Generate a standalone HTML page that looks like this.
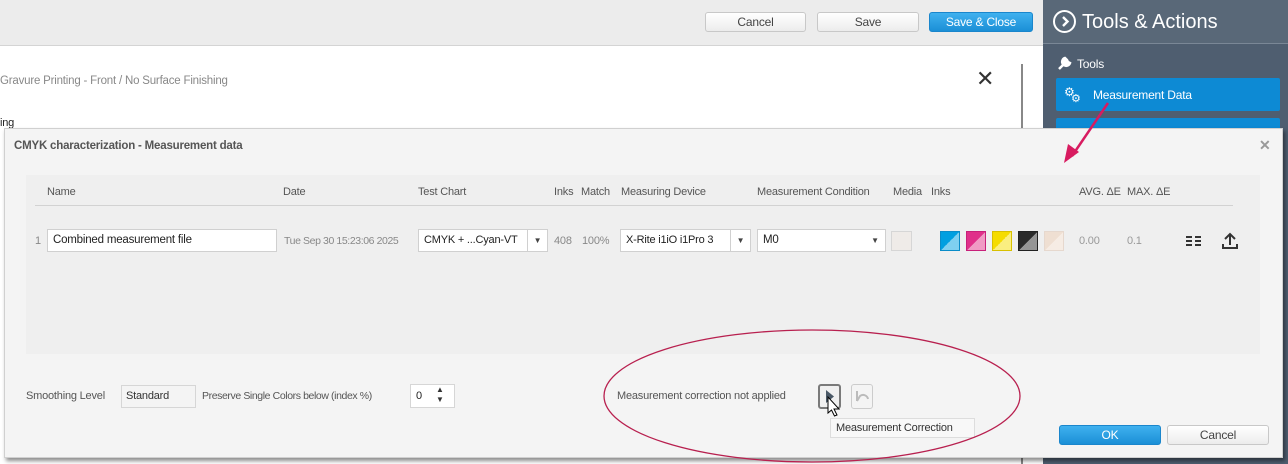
<!DOCTYPE html>
<html><head><meta charset="utf-8"><style>
*{box-sizing:border-box;margin:0;padding:0}
body{width:1288px;height:464px;overflow:hidden;position:relative;background:#fff;font-family:"Liberation Sans",sans-serif;font-size:11px;letter-spacing:-0.2px;color:#555}
.a{position:absolute;white-space:nowrap}
.btn{position:absolute;height:20px;border:1px solid #c8c8c8;border-radius:3px;background:linear-gradient(#fff,#ececec);text-align:center;line-height:18px;color:#444;font-size:12px}
.blue{background:linear-gradient(#3fb1ef,#1b8fd6);border-color:#1a86cc;color:#fff}
.inp{position:absolute;height:23px;border:1px solid #d0d0d0;background:#fff;color:#222;line-height:21px;padding-left:5px;font-size:11.5px;overflow:hidden}
.dd{position:absolute;right:0;top:0;width:20px;height:21px;border-left:1px solid #d0d0d0;font-size:8px;text-align:center;color:#444;background:#fff}
.sw{position:absolute;top:231px;width:20px;height:20px}
</style></head><body>
<div class="a" style="left:0;top:0;width:1043px;height:46px;background:#ececec;border-bottom:1px solid #d4d4d4"></div>
<div class="btn" style="left:705px;top:12px;width:101px">Cancel</div>
<div class="btn" style="left:817px;top:12px;width:102px">Save</div>
<div class="btn blue" style="left:929px;top:12px;width:104px">Save &amp; Close</div>
<div class="a" style="left:0;top:75px;color:#888;font-size:11.5px">Gravure Printing - Front / No Surface Finishing</div>
<div class="a" style="left:976px;top:66px;font-size:22px;color:#333">✕</div>
<div class="a" style="left:0;top:117px;color:#222">ing</div>
<div class="a" style="left:1021px;top:64px;width:2px;height:400px;background:#888"></div>
<div class="a" style="left:1043px;top:0;width:245px;height:464px;background:#4f5e70"></div>
<div class="a" style="left:1043px;top:0;width:245px;height:44px;background:#596878;border-bottom:1px solid #7a8796"></div>
<div class="a" style="left:1053px;top:10px;width:23px;height:23px;border:2px solid #fff;border-radius:50%"></div>
<svg class="a" style="left:1053px;top:10px" width="23" height="23"><path d="M10 7 L14.5 11.5 L10 16" stroke="#fff" stroke-width="2.4" fill="none"/></svg>
<div class="a" style="left:1082px;top:11px;font-size:20px;color:#fff;letter-spacing:0">Tools &amp; Actions</div>
<svg class="a" style="left:1057px;top:55px" width="16" height="16"><path d="M2 14 L9 7 M8 3 a4 4 0 1 0 5 5 l-2-1 -1-2z" stroke="#fff" stroke-width="2.5" fill="#fff"/></svg>
<div class="a" style="left:1077px;top:57px;color:#fff;font-size:12px">Tools</div>
<div class="a" style="left:1056px;top:78px;width:224px;height:33px;background:#0d8ad4;border-radius:2px"></div>
<div class="a" style="left:1064px;top:85px;color:#fff;font-size:12px">⚙</div><div class="a" style="left:1071px;top:92px;color:#fff;font-size:11px">⚙</div>
<div class="a" style="left:1093px;top:88px;color:#fff;font-size:12px">Measurement Data</div>
<div class="a" style="left:1056px;top:118px;width:224px;height:20px;background:#0d8ad4;border-radius:2px"></div>
<div class="a" style="left:4px;top:128px;width:1279px;height:330px;background:#f4f4f4;border:1px solid #d0d0d0;box-shadow:2px 3px 4px rgba(0,0,0,.45)"></div>
<div class="a" style="left:14px;top:140px;color:#555;font-weight:bold;font-size:11.5px">CMYK characterization - Measurement data</div>
<div class="a" style="left:1259px;top:137px;color:#999;font-size:14px;font-weight:bold">✕</div>
<div class="a" style="left:26px;top:175px;width:1234px;height:179px;background:#efefef"></div>
<div class="a" style="left:35px;top:205px;width:1198px;height:1px;background:#d2d2d2"></div>
<div class="a" style="left:47px;top:186px">Name</div>
<div class="a" style="left:283px;top:186px">Date</div>
<div class="a" style="left:418px;top:186px">Test Chart</div>
<div class="a" style="left:554px;top:186px">Inks</div>
<div class="a" style="left:581px;top:186px">Match</div>
<div class="a" style="left:621px;top:186px">Measuring Device</div>
<div class="a" style="left:757px;top:186px">Measurement Condition</div>
<div class="a" style="left:893px;top:186px">Media</div>
<div class="a" style="left:931px;top:186px">Inks</div>
<div class="a" style="left:1079px;top:186px">AVG. ΔE</div>
<div class="a" style="left:1127px;top:186px">MAX. ΔE</div>
<div class="a" style="left:35px;top:235px;color:#888">1</div>
<div class="inp" style="left:47px;top:229px;width:230px">Combined measurement file</div>
<div class="a" style="left:284px;top:235px;color:#888;font-size:10.5px;letter-spacing:-0.4px">Tue Sep 30 15:23:06 2025</div>
<div class="inp" style="left:418px;top:229px;width:130px;font-size:11px">CMYK + ...Cyan-VT<div class="dd">▼</div></div>
<div class="a" style="left:554px;top:235px;color:#888">408</div>
<div class="a" style="left:582px;top:235px;color:#888">100%</div>
<div class="inp" style="left:620px;top:229px;width:131px;font-size:11px">X-Rite i1iO i1Pro 3<div class="dd">▼</div></div>
<div class="inp" style="left:757px;top:229px;width:129px">M0<div class="dd" style="border:none">▼</div></div>
<div class="a" style="left:891px;top:231px;width:21px;height:20px;border:1px solid #d6d6d6;background:#efebe8"></div>
<div class="sw" style="left:940px;background:linear-gradient(135deg,#009fe0 50%,#7fd0f0 50%);border:1px solid #0a8cc8"></div>
<div class="sw" style="left:966px;background:linear-gradient(135deg,#e0308a 50%,#f09ac4 50%);border:1px solid #c8207a"></div>
<div class="sw" style="left:992px;background:linear-gradient(135deg,#f5dc00 50%,#faee80 50%);border:1px solid #d8c000"></div>
<div class="sw" style="left:1018px;background:linear-gradient(135deg,#2a2a2a 50%,#959595 50%);border:1px solid #222"></div>
<div class="sw" style="left:1044px;background:linear-gradient(135deg,#efdfd2 50%,#f6ece4 50%);border:1px solid #e6d8ce"></div>
<div class="a" style="left:1079px;top:235px;color:#999">0.00</div>
<div class="a" style="left:1127px;top:235px;color:#999">0.1</div>
<svg class="a" style="left:1186px;top:235px" width="16" height="12"><g fill="#333"><rect x="0" y="1" width="6" height="2"/><rect x="9" y="1" width="6" height="2"/><rect x="0" y="5" width="6" height="2"/><rect x="9" y="5" width="6" height="2"/><rect x="0" y="9" width="6" height="2"/><rect x="9" y="9" width="6" height="2"/></g></svg>
<svg class="a" style="left:1221px;top:232px" width="18" height="18"><path d="M9 2 L9 13 M4 7 L9 2 L14 7 M2 12 V16 H16 V12" stroke="#333" stroke-width="2" fill="none"/></svg>
<div class="a" style="left:26px;top:390px">Smoothing Level</div>
<div class="a" style="left:121px;top:385px;width:75px;height:23px;border:1px solid #d6d6d6;color:#333;line-height:21px;padding-left:4px">Standard</div>
<div class="a" style="left:202px;top:390px;font-size:10.5px;letter-spacing:-0.4px">Preserve Single Colors below (index %)</div>
<div class="a" style="left:410px;top:384px;width:45px;height:24px;border:1px solid #d6d6d6;background:#fff;color:#222;line-height:22px;padding-left:5px">0</div>
<div class="a" style="left:436px;top:385px;font-size:8px;line-height:10px;color:#333">▲<br>▼</div>
<div class="a" style="left:617px;top:390px">Measurement correction not applied</div>
<div class="a" style="left:818px;top:384px;width:23px;height:25px;border:2px solid #7a7a7a;border-radius:3px;background:#f0f0f0"></div>
<svg class="a" style="left:818px;top:384px;overflow:visible" width="23" height="25"><path d="M8 6 L16 12.5 L8 19z" fill="#4a5866"/><path d="M10 13 V29 L13.5 26 L16.5 32 L19 31 L16 25 L21 25z" fill="#fff" stroke="#000" stroke-width="1"/></svg>
<div class="a" style="left:851px;top:384px;width:22px;height:25px;border:1px solid #ccc;border-radius:3px"></div>
<svg class="a" style="left:851px;top:384px" width="22" height="25"><path d="M6 7 V17 M6 17 L9 12 A5 5 0 0 1 17 15" stroke="#bbb" stroke-width="2" fill="none"/></svg>
<div class="a" style="left:830px;top:418px;width:145px;height:20px;border:1px solid #ddd;background:#f8f8f8;color:#333;line-height:18px;padding-left:5px">Measurement Correction</div>
<div class="btn blue" style="left:1059px;top:425px;width:102px">OK</div>
<div class="btn" style="left:1167px;top:425px;width:102px">Cancel</div>
<svg class="a" style="left:0;top:0" width="1288" height="464">
<ellipse cx="812" cy="396" rx="208" ry="66" fill="none" stroke="#b8204f" stroke-width="1.3"/>
<path d="M1108 103 L1072 156" stroke="#d81b60" stroke-width="2.5"/>
<path d="M1064 163 L1068 144 L1079 152z" fill="#d81b60"/>
</svg>
</body></html>
